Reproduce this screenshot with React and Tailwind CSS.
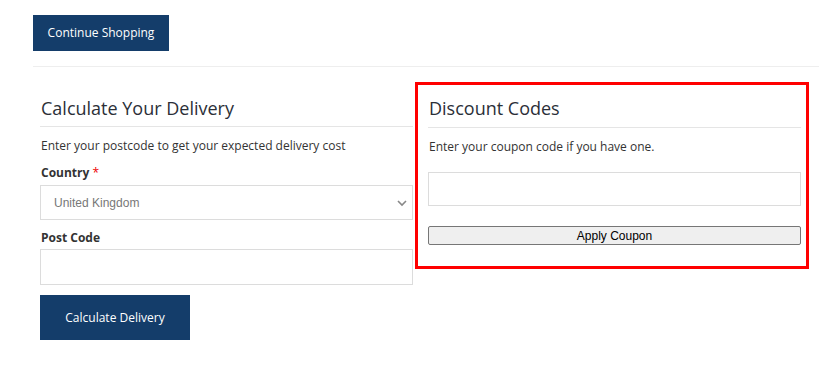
import React from "react";

const App = () => {
  return (
    <div className="w-[819px] h-[366px] bg-white overflow-hidden text-[#333] font-['Open_Sans',sans-serif]">
      <div className="pt-[15px] pl-[33px]">
        <button className="h-[36px] w-[136px] bg-[#143d6a] text-white text-[12px]">
          Continue Shopping
        </button>
        <div className="mt-[15px] border-t border-[#eeeeee]" />

        <div className="flex mt-[15px]">
          {/* Delivery */}
          <div className="ml-[7px] w-[373px] pt-[12px]">
            <h2 className="text-[18px] leading-[28px] pl-[1px] pb-[4px] border-b border-[#e5e5e5] text-[#2b2f38]">
              Calculate Your Delivery
            </h2>
            <p className="mt-[10px] pl-[1px] text-[12px] leading-[18px]">
              Enter your postcode to get your expected delivery cost
            </p>
            <label className="block mt-[9px] pl-[1px] text-[12px] leading-[18px] font-bold">
              Country <span className="text-[#e00] font-normal">*</span>
            </label>
            <div className="mt-[3px] h-[35px] border border-[#dcdcdc] flex items-center justify-between pl-[13px] pr-[4px]">
              <span className="text-[12px] text-[#777] font-['Liberation_Sans',Arial,sans-serif]">
                United Kingdom
              </span>
              <svg width="12" height="12" viewBox="0 0 12 12" fill="none">
                <path d="M2 4l4 4 4-4" stroke="#888" strokeWidth="1.6" />
              </svg>
            </div>
            <label className="block mt-[9px] pl-[1px] text-[12px] leading-[18px] font-bold">
              Post Code
            </label>
            <input
              type="text"
              className="block mt-[2px] w-full h-[36px] border border-[#dcdcdc] outline-none"
            />
            <button className="mt-[10px] h-[45px] w-[150px] bg-[#143d6a] text-white text-[12px]">
              Calculate Delivery
            </button>
          </div>

          {/* Discount */}
          <div className="ml-[2px] w-[394px] h-[187px] border-[3px] border-[#ff0000] pl-[10px] pr-[5px] pt-[9px]">
            <h2 className="text-[18px] leading-[28px] pl-[1px] pb-[5px] border-b border-[#e5e5e5] text-[#2b2f38]">
              Discount Codes
            </h2>
            <p className="mt-[10px] pl-[1px] text-[12px] leading-[18px]">
              Enter your coupon code if you have one.
            </p>
            <input
              type="text"
              className="block mt-[16px] w-full h-[34px] border border-[#dcdcdc] outline-none"
            />
            <button className="block mt-[20px] w-full h-[19px] bg-[#efefef] border border-[#767676] rounded-[2px] text-[12px] leading-[16px] text-black font-['Liberation_Sans',Arial,sans-serif]">
              Apply Coupon
            </button>
          </div>
        </div>
      </div>
    </div>
  );
};

export default App;
